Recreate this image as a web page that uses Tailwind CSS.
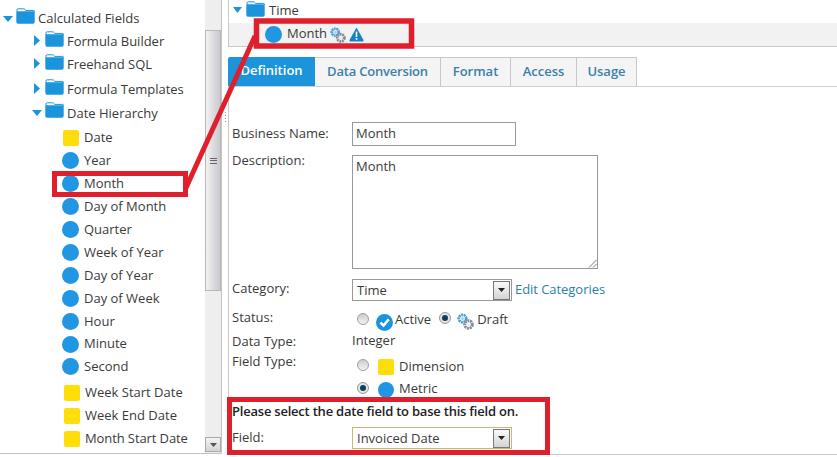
<!doctype html>
<html>

<head>
    <meta charset="UTF-8">
    <script src="https://cdn.jsdelivr.net/npm/@tailwindcss/browser@4"></script>
    <title>Calculated Fields</title>
</head>

<body class="bg-white">
    <svg class="hidden">
        <symbol id="folder" viewBox="0 0 19 16">
            <path d="M1 4V1.800Q1 0.800 2.200 0.800H7.500Q8.500 0.800 9 1.600L9.500 2.400H17.500Q18.500 2.400 18.500 3.400V4Z" fill="#fff" stroke="#1b94dc" stroke-width="1" />
            <path d="M0.300 4.800Q0.300 3.600 1.500 3.600H17.500Q18.700 3.600 18.700 4.800V14Q18.700 15.700 17 15.700H2Q0.300 15.700 0.300 14Z" fill="#1b94dc" />
        </symbol>
        <symbol id="gears" viewBox="0 0 17 17">
            <circle cx="5.500" cy="5.500" r="3.700" fill="none" stroke="#4a9fd6" stroke-width="2.800" stroke-dasharray="2 0.600" />
            <circle cx="5.500" cy="5.500" r="1.600" fill="#a6d3ee" />
            <circle cx="11.500" cy="11.500" r="3.800" fill="none" stroke="#858c94" stroke-width="3" stroke-dasharray="2 0.700" />
            <circle cx="11.500" cy="11.500" r="1.300" fill="#e4e6e8" />
        </symbol>
    </svg>

    <div class="relative w-[837px] h-[457px] overflow-hidden flex font-['Open_Sans','DejaVu_Sans',sans-serif] text-[13px] leading-[18px] text-[#3a3a3a]">
        <!-- left tree -->
        <div class="w-[222px] h-[454px] shrink-0 flex border-b border-b-[#c4c4c4] border-r border-r-[#c4c4c4]">
            <div class="w-[205px] pt-[6px]">
                <div class="h-[23px] flex items-center pl-[3px]">
                    <svg class="w-[10px] h-[6px] mr-[3px] mt-[2px]" viewBox="0 0 10 6"><path d="M0 0H10L5 6Z" fill="#1b94dc" /></svg>
                    <svg class="w-[19px] h-[16px] -mt-[4px]"><use href="#folder" /></svg>
                    <span class="ml-[3px]">Calculated Fields</span>
                </div>
                <div class="h-[23px] flex items-center pl-[34px]">
                    <svg class="w-[6px] h-[11px] mr-[5px] -mt-[1px]" viewBox="0 0 6 11"><path d="M0 0L6 5.500L0 11Z" fill="#1b94dc" /></svg>
                    <svg class="w-[19px] h-[16px] -mt-[4px]"><use href="#folder" /></svg>
                    <span class="ml-[3px]">Formula Builder</span>
                </div>
                <div class="h-[24px] flex items-center pl-[34px]">
                    <svg class="w-[6px] h-[11px] mr-[5px] -mt-[1px]" viewBox="0 0 6 11"><path d="M0 0L6 5.500L0 11Z" fill="#1b94dc" /></svg>
                    <svg class="w-[19px] h-[16px] -mt-[4px]"><use href="#folder" /></svg>
                    <span class="ml-[3px]">Freehand SQL</span>
                </div>
                <div class="h-[25px] flex items-center pl-[34px]">
                    <svg class="w-[6px] h-[11px] mr-[5px] -mt-[1px]" viewBox="0 0 6 11"><path d="M0 0L6 5.500L0 11Z" fill="#1b94dc" /></svg>
                    <svg class="w-[19px] h-[16px] -mt-[4px]"><use href="#folder" /></svg>
                    <span class="ml-[3px]">Formula Templates</span>
                </div>
                <div class="h-[24px] flex items-center pl-[32px]">
                    <svg class="w-[10px] h-[6px] mr-[3px]" viewBox="0 0 10 6"><path d="M0 0H10L5 6Z" fill="#1b94dc" /></svg>
                    <svg class="w-[19px] h-[16px] -mt-[6px]"><use href="#folder" /></svg>
                    <span class="ml-[3px]">Date Hierarchy</span>
                </div>

                <div class="h-[23px] flex items-center pl-[63px] gap-[5px]"><span class="w-4 h-4 mt-[2px] rounded-[2px] bg-[#ffdd0a]"></span>Date</div>
                <div class="h-[23px] flex items-center pl-[62px] gap-[5px]"><span class="w-[17px] h-[17px] mt-[2px] rounded-full bg-[#2196e3]"></span>Year</div>
                <div class="h-[23px] flex items-center pl-[62px] gap-[5px]"><span class="w-[17px] h-[17px] mt-[2px] rounded-full bg-[#2196e3]"></span>Month</div>
                <div class="h-[23px] flex items-center pl-[62px] gap-[5px]"><span class="w-[17px] h-[17px] mt-[2px] rounded-full bg-[#2196e3]"></span>Day of Month</div>
                <div class="h-[23px] flex items-center pl-[62px] gap-[5px]"><span class="w-[17px] h-[17px] mt-[2px] rounded-full bg-[#2196e3]"></span>Quarter</div>
                <div class="h-[23px] flex items-center pl-[62px] gap-[5px]"><span class="w-[17px] h-[17px] mt-[2px] rounded-full bg-[#2196e3]"></span>Week of Year</div>
                <div class="h-[23px] flex items-center pl-[62px] gap-[5px]"><span class="w-[17px] h-[17px] mt-[2px] rounded-full bg-[#2196e3]"></span>Day of Year</div>
                <div class="h-[23px] flex items-center pl-[62px] gap-[5px]"><span class="w-[17px] h-[17px] mt-[2px] rounded-full bg-[#2196e3]"></span>Day of Week</div>
                <div class="h-[23px] flex items-center pl-[62px] gap-[5px]"><span class="w-[17px] h-[17px] mt-[2px] rounded-full bg-[#2196e3]"></span>Hour</div>
                <div class="h-[22px] flex items-center pl-[62px] gap-[5px]"><span class="w-[17px] h-[17px] mt-[2px] rounded-full bg-[#2196e3]"></span>Minute</div>
                <div class="h-[23px] flex items-center pl-[62px] gap-[5px]"><span class="w-[17px] h-[17px] mt-[2px] rounded-full bg-[#2196e3]"></span>Second</div>
                <div class="h-[23px] mt-[3px] flex items-center pl-[64px] gap-[5px]"><span class="w-4 h-4 mt-[2px] rounded-[2px] bg-[#ffdd0a]"></span>Week Start Date</div>
                <div class="h-[23px] flex items-center pl-[64px] gap-[5px]"><span class="w-4 h-4 mt-[2px] rounded-[2px] bg-[#ffdd0a]"></span>Week End Date</div>
                <div class="h-[23px] flex items-center pl-[64px] gap-[5px] tracking-[-0.1px]"><span class="w-4 h-4 mt-[2px] rounded-[2px] bg-[#ffdd0a]"></span>Month Start Date</div>
            </div>
            <!-- scrollbar -->
            <div class="w-[16px] bg-[#eeeeee] flex flex-col">
                <div class="h-[30px]"></div>
                <div class="h-[261px] border border-[#b9b9b9] bg-gradient-to-r from-[#f2f2f2] to-[#c9c9cf] flex items-center justify-center">
                    <span class="w-[7px] h-[6px] border-y border-[#666] relative after:absolute after:left-0 after:right-0 after:top-[1.500px] after:h-px after:bg-[#666]"></span>
                </div>
                <div class="flex-1"></div>
                <div class="h-[15px] mb-px bg-gradient-to-b from-[#f4f4f4] to-[#d4d4d4] border border-[#aaa] flex items-center justify-center">
                    <svg class="w-[7px] h-[4px]" viewBox="0 0 7 4"><path d="M0 0H7L3.500 4Z" fill="#555" /></svg>
                </div>
            </div>
        </div>

        <!-- splitter -->
        <div class="w-[6px] shrink-0 flex flex-col items-center pt-[112px] gap-[2px]">
            <span class="w-px h-px bg-[#888]"></span><span class="w-px h-px bg-[#888]"></span><span class="w-px h-px bg-[#888]"></span><span class="w-px h-px bg-[#888]"></span>
        </div>

        <!-- right panel -->
        <div class="flex-1 flex flex-col min-w-0">
            <div class="h-[47px] border-l border-b border-[#c9c9c9]">
                <div class="h-[23px] flex items-center pl-[4px]">
                    <svg class="w-[9px] h-[6px] mr-[4px] -mt-[4px]" viewBox="0 0 9 6"><path d="M0 0H9L4.500 6Z" fill="#1b94dc" /></svg>
                    <svg class="w-[19px] h-[16px] -mt-[6px]"><use href="#folder" /></svg>
                    <span class="ml-[4px] -mt-[3px]">Time</span>
                </div>
                <div class="h-[23px] bg-[#f2f2f2] flex items-center pl-[36px]">
                    <span class="w-[17px] h-[17px] rounded-full bg-[#2196e3] mr-[5px]"></span>
                    <span class="-mt-[3px]">Month</span>
                    <svg class="w-4 h-4 ml-[3px]"><use href="#gears" /></svg>
                    <svg class="w-[15px] h-[15px] ml-[3px]" viewBox="0 0 15 15"><path d="M7.500 0.500L14.500 13Q14.800 14.500 13.500 14.500H1.500Q0.200 14.500 0.500 13Z" fill="#1481c9" /><rect x="6.700" y="4.500" width="1.600" height="5.500" fill="#fff" /><rect x="6.700" y="11" width="1.600" height="1.800" fill="#fff" /></svg>
                </div>
            </div>

            <!-- tabs -->
            <div class="h-[30px] mt-[10px] flex border-b border-[#d0d0d0] font-semibold text-[#3b80a8] shrink-0">
                <div class="w-[87px] flex items-center justify-center pb-[3px] bg-[#1b94dc] text-white rounded-tl-[2px]">Definition</div>
                <div class="w-[126px] flex items-center justify-center pb-[3px] bg-[#f4f4f4] border-t border-r border-[#c8c8c8] tracking-[-0.2px]">Data Conversion</div>
                <div class="w-[70px] flex items-center justify-center pb-[3px] bg-[#f4f4f4] border-t border-r border-[#c8c8c8]">Format</div>
                <div class="w-[66px] flex items-center justify-center pb-[3px] bg-[#f4f4f4] border-t border-r border-[#c8c8c8]">Access</div>
                <div class="w-[60px] flex items-center justify-center pb-[3px] bg-[#f4f4f4] border-t border-r border-[#c8c8c8]">Usage</div>
            </div>

            <!-- form -->
            <div class="flex-1 border-l border-[#c9c9c9] pl-[3px]">
                <div class="h-[35px]"></div>
                <div class="flex h-[24px] items-center">
                    <div class="w-[120px] -mt-[2px]">Business Name:</div>
                    <div class="w-[164px] h-[24px] border border-[#999] pl-[3px] leading-[20px]">Month</div>
                </div>
                <div class="flex h-[115px] mt-[9px]">
                    <div class="w-[120px] -mt-[4px]">Description:</div>
                    <div class="w-[246px] h-[114px] border border-[#999] px-[3px] pt-[1px] relative">Month
                        <svg class="absolute right-0 bottom-0 w-[9px] h-[9px]" viewBox="0 0 9 9"><path d="M8.500 1L1 8.500M8.500 5L5 8.500" stroke="#777" fill="none" /></svg>
                    </div>
                </div>
                <div class="flex h-[23px] mt-[9px]">
                    <div class="w-[120px]">Category:</div>
                    <div class="w-[160px] h-[22px] border border-[#999] pl-[4px] flex justify-between items-center pr-px">Time
                        <span class="w-[17px] h-[19px] border border-[#777] bg-gradient-to-b from-[#fafafa] to-[#d4d4d4] flex items-center justify-center"><svg class="w-[7px] h-[4px]" viewBox="0 0 7 4"><path d="M0 0H7L3.500 4Z" fill="#222" /></svg></span>
                    </div>
                    <a class="ml-[3px] mt-px text-[#2a7fa8] tracking-[-0.05px]">Edit Categories</a>
                </div>
                <div class="flex h-[24px] mt-[7px]">
                    <div class="w-[125px] -mt-px">Status:</div>
                    <div class="flex items-start">
                        <span class="w-3 h-3 mt-[4px] rounded-full border border-[#a0a0a0] bg-gradient-to-b from-[#ccc] to-[#f4f4f4]"></span>
                        <svg class="w-[17px] h-[17px] ml-[7px] mt-[5px]" viewBox="0 0 16 16"><circle cx="8" cy="8" r="8" fill="#1b94dc" /><path d="M4.200 8L7 11L12 5" stroke="#fff" stroke-width="2.400" fill="none" /></svg>
                        <span class="ml-[2px] mt-px">Active</span>
                        <span class="ml-[8px] mt-[3px] w-3 h-3 rounded-full border border-[#999] bg-[#e4e4e4] flex items-center justify-center"><span class="w-[6px] h-[6px] rounded-full bg-[#0d3f63]"></span></span>
                        <svg class="w-[17px] h-[17px] ml-[6px] mt-[4px]"><use href="#gears" /></svg>
                        <span class="ml-[3px] mt-px">Draft</span>
                    </div>
                </div>
                <div class="flex h-[19px]">
                    <div class="w-[120px] -mt-px">Data Type:</div>
                    <div class="-mt-[2px]">Integer</div>
                </div>
                <div class="flex h-[23px]">
                    <div class="w-[125px]">Field Type:</div>
                    <div class="flex items-start">
                        <span class="w-3 h-3 mt-[7px] rounded-full border border-[#a0a0a0] bg-gradient-to-b from-[#ccc] to-[#f4f4f4]"></span>
                        <span class="w-4 h-4 ml-[9px] mt-[7px] rounded-[2px] bg-[#ffdd0a]"></span>
                        <span class="ml-[5px] mt-[5px]">Dimension</span>
                    </div>
                </div>
                <div class="flex h-[23px]">
                    <div class="w-[125px]"></div>
                    <div class="flex items-start">
                        <span class="w-3 h-3 mt-[7px] rounded-full border border-[#999] bg-[#e4e4e4] flex items-center justify-center"><span class="w-[6px] h-[6px] rounded-full bg-[#0d3f63]"></span></span>
                        <span class="w-4 h-4 ml-[9px] mt-[7px] rounded-full bg-[#2196e3]"></span>
                        <span class="ml-[5px] mt-[4px]">Metric</span>
                    </div>
                </div>
                <div class="mt-[4px] font-semibold text-[#222] tracking-[-0.22px]">Please select the date field to base this field on.</div>
                <div class="flex h-[23px] mt-[7px]">
                    <div class="w-[120px] mt-[1px]">Field:</div>
                    <div class="w-[160px] h-[22px] border border-[#d9b36c] pl-[4px] flex justify-between items-center pr-px">Invoiced Date
                        <span class="w-[17px] h-[19px] border border-[#777] bg-gradient-to-b from-[#fafafa] to-[#d4d4d4] flex items-center justify-center"><svg class="w-[7px] h-[4px]" viewBox="0 0 7 4"><path d="M0 0H7L3.500 4Z" fill="#222" /></svg></span>
                    </div>
                </div>
            </div>
            <div class="h-[3px] shrink-0 ml-[322px] border-t border-[#c9c9c9]"></div>
        </div>

        <!-- red annotations -->
        <svg class="absolute left-0 top-0 w-[837px] h-[457px] pointer-events-none" viewBox="0 0 837 457">
            <rect x="54.500" y="173.500" width="131" height="21" fill="none" stroke="#e01f2d" stroke-width="5" />
            <rect x="256.500" y="21" width="155" height="25" fill="none" stroke="#e01f2d" stroke-width="5.500" />
            <path d="M185 190L255 36" stroke="#e01f2d" stroke-width="5" fill="none" />
            <rect x="229.500" y="399.500" width="318" height="53" fill="none" stroke="#e01f2d" stroke-width="5" />
        </svg>
    </div>
</body>

</html>
